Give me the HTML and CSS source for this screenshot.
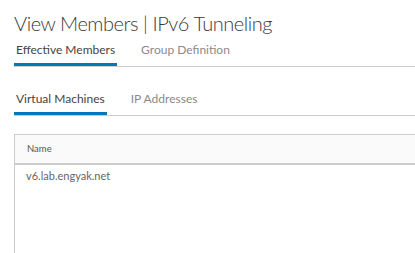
FILE: index.html
```html
<!DOCTYPE html>
<html>
<head>
<meta charset="utf-8">
<link rel="stylesheet" href="styles.css">
</head>
<body>
<div class="page">
  <h1 class="title">View Members | IPv6 Tunneling</h1>
  <div class="tabs tabs-main">
    <div class="tab active">Effective Members</div>
    <div class="tab">Group Definition</div>
  </div>
  <div class="tabs tabs-sub">
    <div class="tab active">Virtual Machines</div>
    <div class="tab">IP Addresses</div>
  </div>
  <div class="grid">
    <div class="grid-head">Name</div>
    <div class="grid-row">v6.lab.engyak.net</div>
  </div>
</div>
</body>
</html>
```

FILE: styles.css
```css
html, body {
  margin: 0;
  padding: 0;
  background: #fff;
}
.page {
  padding: 10px 0 0 14px;
  font-family: Lato, "Open Sans", sans-serif;
  height: 243px;
  display: flex;
  flex-direction: column;
}
.title {
  margin: 0;
  font-size: 20px;
  font-weight: 300;
  line-height: 26px;
  color: #3a3a3a;
  letter-spacing: -0.45px;
}
.tabs {
  display: flex;
  gap: 22px;
  border-bottom: 1px solid #cccccc;
}
.tabs-main {
  margin-top: 6px;
}
.tabs-sub {
  margin-top: 24px;
}
.tab {
  font-size: 12px;
  line-height: 16px;
  padding: 0 2px 8px 2px;
  color: #8a8a8a;
}
.tab.active {
  color: #444444;
  box-shadow: inset 0 -3px 0 #0079b8;
}
.grid {
  margin-top: 18px;
  border-top: 1px solid #cccccc;
  border-left: 1px solid #cccccc;
  flex: 1;
}
.grid-head {
  background: #fafafa;
  border-bottom: 2px solid #cccccc;
  height: 28px;
  padding-left: 12px;
  font-size: 9.5px;
  line-height: 28px;
  color: #565656;
}
.grid-row {
  padding: 4px 0 0 11px;
  font-size: 11px;
  line-height: 14px;
  color: #666666;
}
```
